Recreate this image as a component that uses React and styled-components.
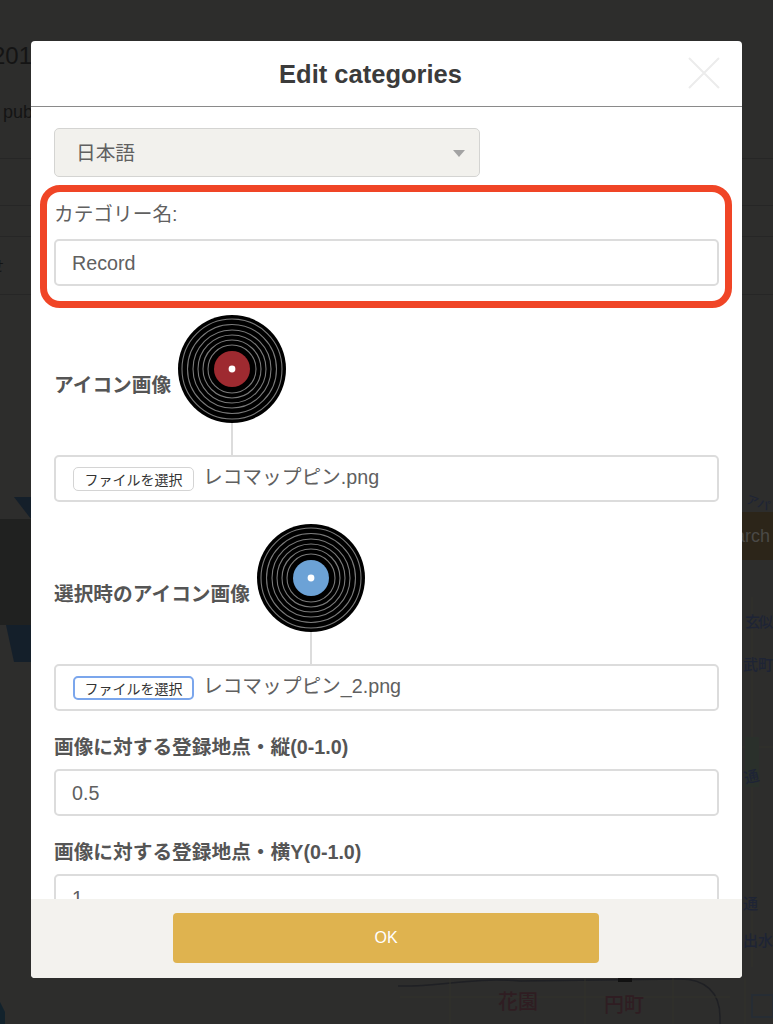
import React from 'react'
import styled, { createGlobalStyle } from 'styled-components'

const Global = createGlobalStyle`
  html, body { margin: 0; padding: 0; }
  body {
    font-family: "Liberation Sans", "Noto Sans CJK JP", sans-serif;
    color: #5a5a5a;
  }
  * { box-sizing: border-box; }
`

const Page = styled.div`
  position: relative;
  width: 773px;
  height: 1024px;
  overflow: hidden;
  background: #2d2d2c;
`

/* dimmed page behind the dialog */
const BackPage = styled.div`
  display: flex;
  flex-direction: column;
  height: 100%;
`
const BackHead = styled.div`
  height: 159px;
  padding: 42px 0 0;
  border-bottom: 1px solid #262626;
  color: #141414;
  overflow: hidden;
`
const BackYear = styled.div`
  font-size: 24px;
  line-height: 28px;
  margin-left: -8px;
`
const BackSub = styled.div`
  font-size: 18px;
  line-height: 20px;
  margin: 32px 0 0 3px;
`
const BackRow = styled.div`
  height: ${(p) => p.$h}px;
  border-bottom: 1px solid #262626;
  font-size: 14px;
  line-height: ${(p) => p.$h}px;
  color: #141414;
  margin-left: -10px;
`
const MapArea = styled.div`
  position: relative;
  margin-top: 202px;
  flex: 1;
`
const MapShapes = styled.svg`
  position: absolute;
  inset: 0;
  width: 773px;
  height: 527px;
`
const MapLabel = styled.span`
  position: absolute;
  left: ${(p) => p.$x}px;
  top: ${(p) => p.$y}px;
  font-size: ${(p) => p.$size || 15}px;
  line-height: 1;
  font-weight: 500;
  color: ${(p) => p.$color || '#1e2435'};
  transform: rotate(${(p) => p.$rot || 0}deg);
  white-space: nowrap;
`
const SearchBtn = styled.div`
  position: absolute;
  left: 700px;
  top: 15px;
  width: 73px;
  height: 48px;
  background: #2c2519;
  color: #4a4946;
  font-size: 18px;
  line-height: 48px;
  text-align: right;
  padding-right: 3px;
`

/* dialog */
const Overlay = styled.div`
  position: absolute;
  inset: 0;
  padding: 41px 31px 46px;
`
const Modal = styled.div`
  position: relative;
  width: 711px;
  height: 937px;
  display: flex;
  flex-direction: column;
  background: #fff;
  border-radius: 4px;
  overflow: hidden;
`
const Header = styled.div`
  position: relative;
  flex: none;
  height: 66px;
  padding-right: 32px;
  display: flex;
  align-items: center;
  justify-content: center;
  border-bottom: 1px solid #8a8a8a;
`
const Title = styled.h2`
  margin: 2px 0 0;
  font-size: 25.5px;
  font-weight: 700;
  color: #3b3b3b;
`
const Close = styled.svg`
  position: absolute;
  right: 22px;
  top: 16px;
  width: 32px;
  height: 32px;
`
const Body = styled.div`
  flex: 1;
  min-height: 0;
  overflow: hidden;
  padding: 21px 23px 0;
`
const SelectBox = styled.div`
  position: relative;
  width: 426px;
  height: 49px;
  padding: 0 0 3px 21px;
  display: flex;
  align-items: center;
  background: #f2f1ed;
  border: 1px solid #d4d4d2;
  border-radius: 5px;
  font-size: 19.7px;
  color: #606060;
  &::after {
    content: '';
    position: absolute;
    right: 14px;
    top: 21px;
    border-left: 6px solid transparent;
    border-right: 6px solid transparent;
    border-top: 7px solid #a3a3a3;
  }
`
const PlainLabel = styled.div`
  margin-top: 24px;
  height: 24px;
  padding-top: 1px;
  font-size: 19.7px;
  line-height: 24px;
  color: #606060;
`
const Input = styled.div`
  height: 47px;
  margin-top: ${(p) => p.$mt || 0}px;
  padding: 1px 0 0 16px;
  display: flex;
  align-items: center;
  background: #fff;
  border: 2px solid #dcdcdc;
  border-radius: 5px;
  font-size: 19.7px;
  color: #606060;
`
const ImageRow = styled.div`
  margin-top: ${(p) => p.$mt}px;
  height: 140px;
  display: flex;
  align-items: center;
  gap: 7px;
`
const BoldLabel = styled.div`
  font-size: 19.7px;
  line-height: 24px;
  font-weight: 700;
  color: #555;
  white-space: nowrap;
  margin-top: ${(p) => p.$mt || 0}px;
`
const PointLabel = styled(BoldLabel)`
  margin-top: ${(p) => p.$mt}px;
  margin-bottom: 10px;
`
const FileField = styled.div`
  height: 47px;
  padding-left: 17px;
  display: flex;
  align-items: center;
  gap: 9px;
  border: 2px solid #dcdcdc;
  border-radius: 5px;
`
const FileBtn = styled.div`
  width: 121px;
  height: 24px;
  margin-top: 1px;
  display: flex;
  align-items: center;
  justify-content: center;
  background: #fff;
  border-radius: 5px;
  border: ${(p) => (p.$focus ? '2px solid #7ba6ec' : '1px solid #d4d4d4')};
  font-size: 14px;
  color: #333;
`
const FileName = styled.span`
  font-size: 19.7px;
  color: #606060;
  margin-top: -7px;
`
const Footer = styled.div`
  position: absolute;
  left: 0;
  right: 0;
  bottom: 0;
  height: 79px;
  padding: 14px 0 0 142px;
  background: #f3f2ee;
`
const OkBtn = styled.div`
  width: 426px;
  height: 50px;
  display: flex;
  align-items: center;
  justify-content: center;
  background: #dfb34f;
  border-radius: 4px;
  color: #fff;
  font-size: 16px;
`
const Highlight = styled.div`
  position: absolute;
  left: 9px;
  top: 144px;
  width: 692px;
  height: 123px;
  border: 7px solid #f04526;
  border-radius: 20px;
  pointer-events: none;
`

const rings = [50, 44.5, 39, 34, 29, 24]

const Disc = ({ color }) => (
  <svg width="108" height="140" viewBox="0 0 108 140" style={{ flex: 'none' }}>
    <rect x="53" y="108" width="2" height="32" fill="#dcdcdc" />
    <circle cx="54" cy="54" r="54" fill="#000" />
    {rings.map((r) => (
      <circle key={r} cx="54" cy="54" r={r} fill="none" stroke="#7a7a7a" strokeWidth="1.1" />
    ))}
    <circle cx="54" cy="54" r="18" fill={color} />
    <circle cx="54" cy="54" r="3.4" fill="#fff" />
  </svg>
)

const App = () => {
  return (
    <Page>
      <Global />
      <BackPage>
        <BackHead>
          <BackYear>2018</BackYear>
          <BackSub>pub</BackSub>
        </BackHead>
        <BackRow $h={47} />
        <BackRow $h={31} />
        <BackRow $h={58}>せ</BackRow>
        <MapArea>
          <MapShapes viewBox="0 0 773 527">
            <polygon points="14,0 31,0 31,22" fill="#141f2a" />
            <rect x="0" y="22" width="31" height="106" fill="#202120" />
            <polygon points="6,128 31,128 31,165 14,165" fill="#141f2a" />
            <polygon points="0,505 5,515 5,527 0,527" fill="#12222c" />
            <path d="M398 489 C440 490 470 480 520 484 L680 482 C705 482 720 495 720 520 V527" fill="none" stroke="#1f2024" strokeWidth="1.5" />
            <path d="M450 481V527M585 481V527M673 481V527M745 481V527M400 500H730" fill="none" stroke="#33322a" strokeWidth="1" />
            <path d="M752 100V470M742 250H773" fill="none" stroke="#33322a" strokeWidth="1" />
            <rect x="745" y="240" width="14" height="50" fill="#2a302b" />
            <rect x="618" y="481" width="14" height="4" fill="#111" />
            <rect x="752" y="498" width="21" height="22" fill="none" stroke="#262c33" strokeWidth="2" />
          </MapShapes>
          <SearchBtn>Search</SearchBtn>
          <MapLabel $x={746} $y={0} $size={12} $rot={20}>アパ</MapLabel>
          <MapLabel $x={745} $y={117}>玄</MapLabel>
          <MapLabel $x={758} $y={117}>似</MapLabel>
          <MapLabel $x={743} $y={160}>武町</MapLabel>
          <MapLabel $x={744} $y={272} $rot={-14}>通</MapLabel>
          <MapLabel $x={743} $y={399}>通</MapLabel>
          <MapLabel $x={743} $y={436}>出水</MapLabel>
          <MapLabel $x={498} $y={495} $size={20} $color="#2f1d22">花園</MapLabel>
          <MapLabel $x={604} $y={498} $size={20} $color="#2f1d22">円町</MapLabel>
        </MapArea>
      </BackPage>

      <Overlay>
        <Modal>
          <Header>
            <Title>Edit categories</Title>
            <Close viewBox="0 0 32 32">
              <path d="M1 1L31 31M31 1L1 31" stroke="#ececec" strokeWidth="2" fill="none" />
            </Close>
          </Header>
          <Body>
            <SelectBox>日本語</SelectBox>
            <PlainLabel>カテゴリー名:</PlainLabel>
            <Input $mt={14}>Record</Input>

            <ImageRow $mt={29}>
              <BoldLabel>アイコン画像</BoldLabel>
              <Disc color="#9e2a30" />
            </ImageRow>
            <FileField>
              <FileBtn>ファイルを選択</FileBtn>
              <FileName>レコマップピン.png</FileName>
            </FileField>

            <ImageRow $mt={22}>
              <BoldLabel>選択時のアイコン画像</BoldLabel>
              <Disc color="#6ca2d6" />
            </ImageRow>
            <FileField>
              <FileBtn $focus>ファイルを選択</FileBtn>
              <FileName>レコマップピン_2.png</FileName>
            </FileField>

            <PointLabel $mt={24}>画像に対する登録地点・縦(0-1.0)</PointLabel>
            <Input>0.5</Input>
            <PointLabel $mt={24}>画像に対する登録地点・横Y(0-1.0)</PointLabel>
            <Input>1</Input>
          </Body>
          <Footer>
            <OkBtn>OK</OkBtn>
          </Footer>
          <Highlight />
        </Modal>
      </Overlay>
    </Page>
  )
}

export default App
